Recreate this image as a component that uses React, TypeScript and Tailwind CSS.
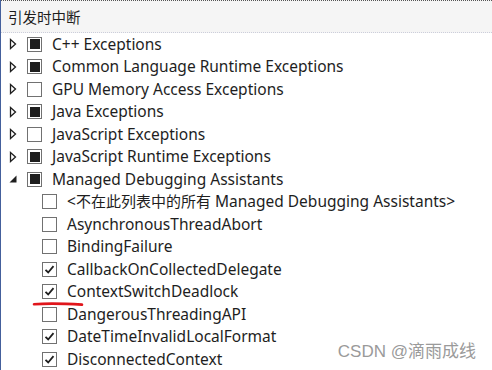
import React from "react";

type Row = { label: React.ReactNode; key: string; state: "full" | "empty" | "check"; level: 0 | 1; arrow?: "closed" | "open"; mark?: boolean };

const rows: Row[] = [
  { key: "cpp", label: "C++ Exceptions", state: "full", level: 0, arrow: "closed" },
  { key: "clr", label: "Common Language Runtime Exceptions", state: "full", level: 0, arrow: "closed" },
  { key: "gpu", label: "GPU Memory Access Exceptions", state: "empty", level: 0, arrow: "closed" },
  { key: "java", label: "Java Exceptions", state: "full", level: 0, arrow: "closed" },
  { key: "js", label: "JavaScript Exceptions", state: "empty", level: 0, arrow: "closed" },
  { key: "jsr", label: "JavaScript Runtime Exceptions", state: "full", level: 0, arrow: "closed" },
  { key: "mda", label: "Managed Debugging Assistants", state: "full", level: 0, arrow: "open" },
  {
    key: "all",
    label: (
      <>
        &lt;<span className="text-[15px]">不在此列表中的所有</span> Managed Debugging Assistants&gt;
      </>
    ),
    state: "empty",
    level: 1,
  },
  { key: "ata", label: "AsynchronousThreadAbort", state: "empty", level: 1 },
  { key: "bf", label: "BindingFailure", state: "empty", level: 1 },
  { key: "cb", label: "CallbackOnCollectedDelegate", state: "check", level: 1 },
  { key: "csd", label: "ContextSwitchDeadlock", state: "check", level: 1, mark: true },
  { key: "dta", label: "DangerousThreadingAPI", state: "empty", level: 1 },
  { key: "dti", label: "DateTimeInvalidLocalFormat", state: "check", level: 1 },
  { key: "dc", label: "DisconnectedContext", state: "check", level: 1 },
];

const Arrow = ({ kind }: { kind: "closed" | "open" }) =>
  kind === "closed" ? (
    <svg width="8" height="12" viewBox="0 0 8 12" className="shrink-0">
      <path d="M1.5 1.5 L6.5 6 L1.5 10.5 Z" fill="white" stroke="#1e1e1e" strokeWidth="1.3" />
    </svg>
  ) : (
    <svg width="8" height="12" viewBox="0 0 8 12" className="shrink-0">
      <path d="M7.5 2.5 L7.5 9.5 L0.5 9.5 Z" fill="#1e1e1e" />
    </svg>
  );

const Box = ({ state }: { state: Row["state"] }) => (
  <div className="w-[15px] h-[15px] shrink-0 border border-[#717171] bg-white flex items-center justify-center">
    {state === "full" && <div className="w-[10px] h-[10px] bg-[#1e1e1e]" />}
    {state === "check" && (
      <svg width="11" height="11" viewBox="0 0 11 11">
        <path d="M1.5 5.8 L4.2 8.5 L9.5 2.2" fill="none" stroke="#1e1e1e" strokeWidth="1.8" />
      </svg>
    )}
  </div>
);

export default function App() {
  return (
    <div className="relative w-[492px] h-[370px] overflow-hidden bg-white border-l border-[#44609c] text-[#1e1e1e] font-['Noto_Sans','Noto_Sans_CJK_SC',sans-serif]">
      <div className="h-[33px] bg-[#f5f5f5] border-t border-dotted border-[#555] border-b border-b-[#ccceDB] flex items-center pl-[7px] pt-[1px] text-[14.5px] font-['Noto_Sans_CJK_SC',sans-serif]">
        引发时中断
      </div>
      <div>
        {rows.map((r) => (
          <div key={r.key} className="relative h-[22.5px] flex items-center">
            <div className={r.level === 0 ? "w-[26px] pl-[8px] flex items-center" : "w-[41px]"}>
              {r.arrow && <Arrow kind={r.arrow} />}
            </div>
            <Box state={r.state} />
            <span className="ml-[10px] text-[15.5px] whitespace-nowrap leading-none">{r.label}</span>
            {r.mark && (
              <svg className="absolute left-[31px] top-[20px]" width="52" height="6" viewBox="0 0 52 6">
                <path d="M2 3.2 Q 20 1.8 50 3.6" fill="none" stroke="#e0151b" strokeWidth="2.6" strokeLinecap="round" />
              </svg>
            )}
          </div>
        ))}
      </div>
      <div className="absolute right-[16px] bottom-[6px] text-[17px] text-[#9a9a9a] font-['Liberation_Sans','Noto_Sans_CJK_SC',sans-serif]">
        CSDN @滴雨成线
      </div>
    </div>
  );
}
